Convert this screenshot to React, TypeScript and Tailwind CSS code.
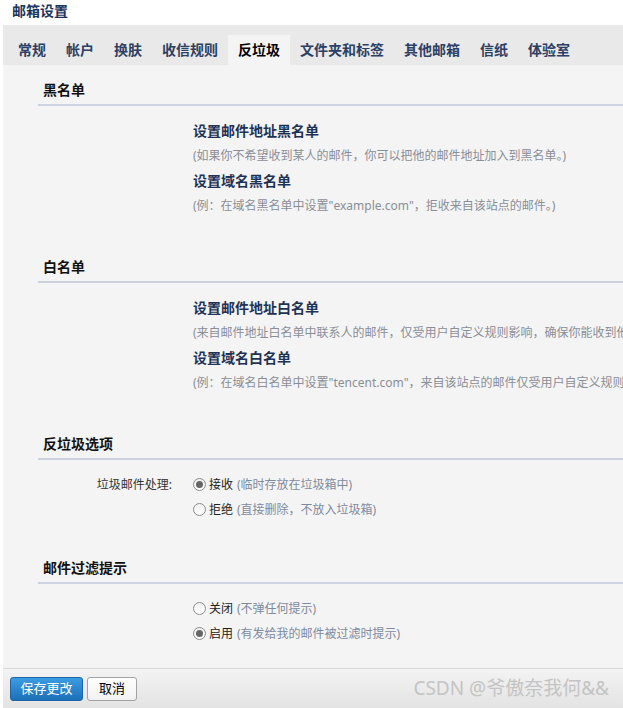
import React from 'react';

const font = { fontFamily: '"Noto Sans", "Noto Sans CJK SC", sans-serif' };

const tabs = ['常规', '帐户', '换肤', '收信规则', '反垃圾', '文件夹和标签', '其他邮箱', '信纸', '体验室'];

function SectionHeading({ children }: { children: React.ReactNode }) {
  return (
    <div className="ml-[35px] border-b-2 border-[#cdd0dd] pl-[5px] pb-[4px] text-[14px] leading-[20px] font-bold text-[#111]">
      {children}
    </div>
  );
}

function LinkTitle({ children }: { children: React.ReactNode }) {
  return (
    <div className="h-[25px] pl-[190px] text-[14px] leading-[25px] font-bold text-[#1f3254] whitespace-nowrap">
      {children}
    </div>
  );
}

function Hint({ children }: { children: React.ReactNode }) {
  return (
    <div className="h-[25px] pl-[190px] text-[12px] leading-[25px] text-[#8a8e97] whitespace-nowrap">
      {children}
    </div>
  );
}

function Radio({ checked }: { checked?: boolean }) {
  return (
    <span className="flex h-[13px] w-[13px] shrink-0 items-center justify-center rounded-full border border-[#8c8c8c] bg-gradient-to-b from-[#f0f0f0] to-white">
      {checked && <span className="h-[7px] w-[7px] rounded-full bg-[#666]" />}
    </span>
  );
}

function RadioRow({ label, checked, text, hint }: { label?: string; checked?: boolean; text: string; hint: string }) {
  return (
    <div className="flex h-[25px] items-center whitespace-nowrap text-[12px]">
      <div className="w-[190px] pr-[21px] text-right text-[#333]">{label}</div>
      <Radio checked={checked} />
      <span className="ml-[3px] text-[#222]">{text}</span>
      <span className="ml-[4px] text-[#7f8aa0]">{hint}</span>
    </div>
  );
}

export default function App() {
  return (
    <div className="flex h-[708px] w-full flex-col overflow-hidden bg-white" style={font}>
      <div className="h-[25px] pl-[12px] text-[14px] leading-[22px] font-bold text-[#1b3560]">邮箱设置</div>

      <div className="ml-[3px] flex h-[40px] items-end bg-[#e9e9e9] pl-[5px]">
        {tabs.map((t) => (
          <div
            key={t}
            className={`h-[30px] px-[10px] text-[14px] leading-[30px] font-bold whitespace-nowrap ${
              t === '反垃圾' ? 'bg-[#f4f4f4] text-black' : 'text-[#2c4066]'
            }`}
          >
            {t}
          </div>
        ))}
      </div>

      <div className="ml-[3px] flex-1 overflow-hidden bg-[#f4f4f4] pt-[15px]">
        <SectionHeading>黑名单</SectionHeading>
        <div className="pt-[12px]">
          <LinkTitle>设置邮件地址黑名单</LinkTitle>
          <Hint>(如果你不希望收到某人的邮件，你可以把他的邮件地址加入到黑名单。)</Hint>
          <LinkTitle>设置域名黑名单</LinkTitle>
          <Hint>(例：在域名黑名单中设置"example.com"，拒收来自该站点的邮件。)</Hint>
        </div>

        <div className="mt-[39px]">
          <SectionHeading>白名单</SectionHeading>
        </div>
        <div className="pt-[12px]">
          <LinkTitle>设置邮件地址白名单</LinkTitle>
          <Hint>(来自邮件地址白名单中联系人的邮件，仅受用户自定义规则影响，确保你能收到他们的邮件。)</Hint>
          <LinkTitle>设置域名白名单</LinkTitle>
          <Hint>(例：在域名白名单中设置"tencent.com"，来自该站点的邮件仅受用户自定义规则影响。)</Hint>
        </div>

        <div className="mt-[39px]">
          <SectionHeading>反垃圾选项</SectionHeading>
        </div>
        <div className="pt-[12px]">
          <RadioRow label="垃圾邮件处理:" checked text="接收" hint="(临时存放在垃圾箱中)" />
          <RadioRow text="拒绝" hint="(直接删除，不放入垃圾箱)" />
        </div>

        <div className="mt-[36px]">
          <SectionHeading>邮件过滤提示</SectionHeading>
        </div>
        <div className="pt-[12px]">
          <RadioRow text="关闭" hint="(不弹任何提示)" />
          <RadioRow checked text="启用" hint="(有发给我的邮件被过滤时提示)" />
        </div>
      </div>

      <div className="ml-[3px] flex h-[40px] shrink-0 items-center gap-[4px] border-t border-[#dadada] bg-gradient-to-b from-[#f3f3f3] to-[#e3e3e3] pl-[7px]">
        <button className="h-[24px] w-[73px] rounded-[3px] border border-[#1b65a8] bg-gradient-to-b from-[#3b9de2] to-[#1d70b8] text-[13px] text-white">
          保存更改
        </button>
        <button className="h-[24px] w-[50px] rounded-[3px] border border-[#a3a3a3] bg-gradient-to-b from-white to-[#f1f1f1] text-[13px] text-black">
          取消
        </button>
        <div className="ml-auto mr-[14px] text-[19px] text-[#c4c4c4] whitespace-nowrap">CSDN @爷傲奈我何&amp;&amp;</div>
      </div>
    </div>
  );
}
